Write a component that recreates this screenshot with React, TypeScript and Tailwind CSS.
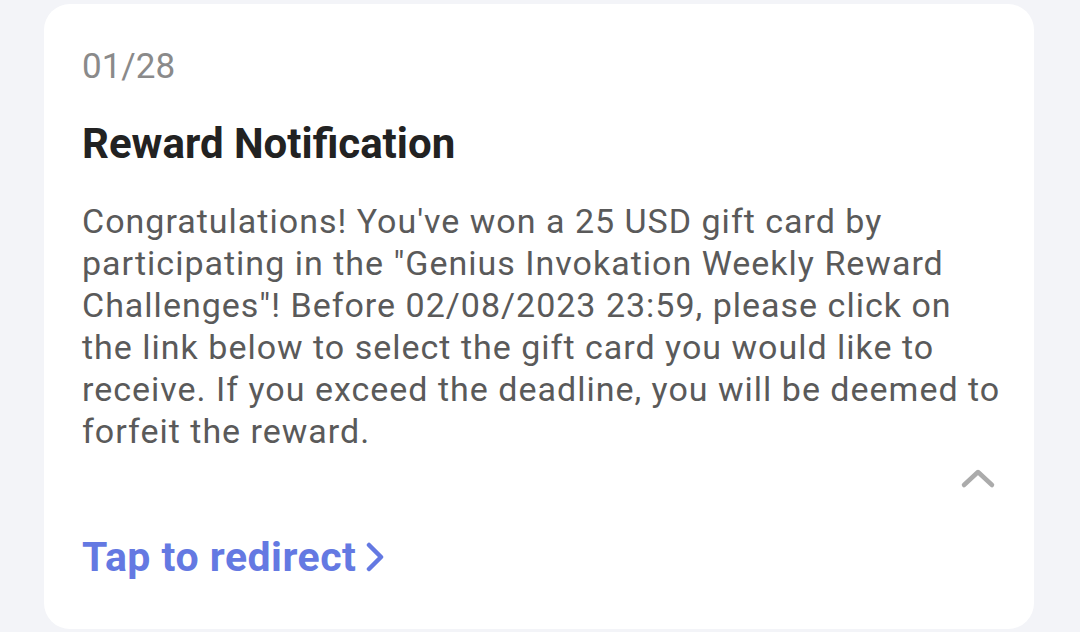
export default function App() {
  return (
    <div className="h-[632px] w-[1080px] bg-[#f3f4f8] pl-[44px] pr-[46px] pt-[4px] pb-[3px] [font-family:Roboto,'Liberation_Sans',sans-serif]">
      <div className="flex h-full flex-col rounded-[26px] bg-white pl-[38px] pr-[28px] pt-[43px]">
        <div className="text-[35px] leading-[40px] text-[#8a8a8a]">01/28</div>
        <h1 className="mt-[33px] text-[42px] font-bold leading-[48px] text-[#222222]">Reward Notification</h1>
        <p className="mt-[32px] text-[34px] leading-[42px] tracking-[1px] text-[#5a5a5a]">
          Congratulations! You've won a 25 USD gift card by participating in the "Genius Invokation Weekly Reward
          Challenges"! Before 02/08/2023 23:59, please click on the link below to select the gift card you would like
          to receive. If you exceed the deadline, you will be deemed to forfeit the reward.
        </p>
        <div className="mt-[15px] flex justify-end pr-[10px]">
          <svg width="38" height="22" viewBox="0 0 38 22" fill="none">
            <path d="M6 18 L20 5 L34 18" stroke="#ababab" strokeWidth="4.5" strokeLinecap="round" strokeLinejoin="round" />
          </svg>
        </div>
        <button className="mt-[44px] flex items-center gap-[9px] self-start text-[41px] font-bold leading-[48px] tracking-[0.5px] text-[#6479e2]">
          Tap to redirect
          <svg width="20" height="30" viewBox="0 0 20 30" fill="none">
            <path d="M4 3 L16 15 L4 27" stroke="#6479e2" strokeWidth="4.5" strokeLinecap="round" strokeLinejoin="round" />
          </svg>
        </button>
      </div>
    </div>
  );
}
